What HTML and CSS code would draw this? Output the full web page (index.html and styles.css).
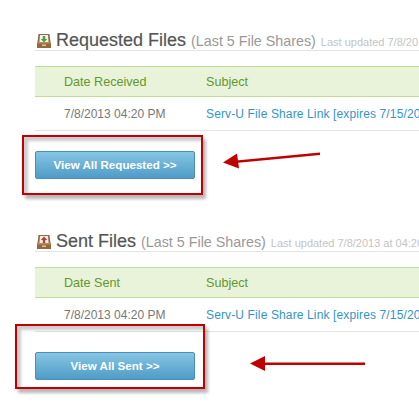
FILE: index.html
```html
<!DOCTYPE html>
<html lang="en">

<head>
  <meta charset="UTF-8">
  <meta name="viewport" content="width=device-width, initial-scale=1.0">
  <title>File Shares</title>
  <link rel="stylesheet" href="styles.css">
</head>

<body>
  <div class="page">
    <div class="section">
      <h2 class="title">
        <svg class="tray" width="16" height="16" viewBox="0 0 16 16">
          <path d="M2.5 1h11l1 8h-13z" fill="#8a6a4a"/>
          <path d="M4 2h8l.6 7H3.4z" fill="#f4f1ea"/>
          <path d="M6.800 3h2.400v3h2l-3.200 3.400L4.800 6h2z" fill="#4f9e3a"/>
          <path d="M1 9h14v6H1z" fill="#94683e"/>
          <path d="M1 9h14v1.500H1z" fill="#b88d5e"/>
          <path d="M6 11.500h4v1.500H6z" fill="#d9c3a3"/>
        </svg>
        <span class="name">Requested Files</span>
        <span class="sub">(Last 5 File Shares)</span>
        <span class="updated">Last updated 7/8/2013 at 04:20 PM</span>
      </h2>
      <div class="table">
        <div class="row head">
          <div class="col-date">Date Received</div>
          <div class="col-subject">Subject</div>
        </div>
        <div class="row">
          <div class="col-date">7/8/2013 04:20 PM</div>
          <div class="col-subject"><a href="#">Serv-U File Share Link [expires 7/15/2013]</a></div>
        </div>
      </div>
      <a class="btn" href="#">View All Requested &gt;&gt;</a>
    </div>

    <div class="section second">
      <h2 class="title">
        <svg class="tray" width="16" height="16" viewBox="0 0 16 16">
          <path d="M2.5 1h11l1 8h-13z" fill="#8a6a4a"/>
          <path d="M4 2h8l.6 7H3.4z" fill="#f4f1ea"/>
          <path d="M8 2.500l3.200 3.400h-2v3.100H6.800V5.900h-2z" fill="#c8352b"/>
          <path d="M1 9h14v6H1z" fill="#94683e"/>
          <path d="M1 9h14v1.500H1z" fill="#b88d5e"/>
          <path d="M6 11.500h4v1.500H6z" fill="#d9c3a3"/>
        </svg>
        <span class="name">Sent Files</span>
        <span class="sub">(Last 5 File Shares)</span>
        <span class="updated">Last updated 7/8/2013 at 04:20 PM</span>
      </h2>
      <div class="table">
        <div class="row head">
          <div class="col-date">Date Sent</div>
          <div class="col-subject">Subject</div>
        </div>
        <div class="row">
          <div class="col-date">7/8/2013 04:20 PM</div>
          <div class="col-subject"><a href="#">Serv-U File Share Link [expires 7/15/2013]</a></div>
        </div>
      </div>
      <a class="btn" href="#">View All Sent &gt;&gt;</a>
    </div>

    <!-- annotations drawn over the screenshot -->
    <div class="mark mark-1"></div>
    <div class="mark mark-2"></div>
    <svg class="arrows" width="419" height="410" viewBox="0 0 419 410">
      <g fill="#c00000" stroke="none">
        <path d="M320 152.500L236 160.500l-.3 2.500L320 155z"/>
        <path d="M223 162.500L237 153.500l2 15z"/>
        <path d="M365 362.500H264v2.500h101z"/>
        <path d="M250 363.500L265 356v15z"/>
      </g>
    </svg>
  </div>
</body>

</html>
```

FILE: styles.css
```css
* {
  margin: 0;
  padding: 0;
  box-sizing: border-box;
}

html {
  background-color: #fff;
}

body {
  font-family: "Liberation Sans", Arial, sans-serif;
}

.page {
  position: relative;
  width: 419px;
  height: 410px;
  overflow: hidden;
  padding: 29px 0 0 35px;
}

.section {
  width: 460px;
}

.second {
  margin-top: 51px;
}

.title {
  display: flex;
  align-items: baseline;
  height: 22px;
  padding-top: 2px;
  border-bottom: 1px solid #e4e4e4;
  white-space: nowrap;
  font-weight: normal;
}

.tray {
  align-self: center;
  flex: none;
  margin: 0 4px 0 1px;
}

.name {
  font-size: 18px;
  line-height: 19px;
  color: #555;
  -webkit-text-stroke: 0.2px #555;
}

.sub {
  font-size: 14.3px;
  color: #999;
  margin-left: 5px;
}

.updated {
  font-size: 11px;
  color: #c4c4c4;
  margin-left: 5px;
}

.table {
  margin-top: 15px;
  font-size: 12px;
}

.row {
  display: flex;
  align-items: center;
  height: 34px;
  border-bottom: 1px solid #e4e4e4;
  color: #777;
}

.head {
  height: 31px;
  background-color: #e9f3d9;
  border-top: 1px solid #c3dc95;
  border-bottom: 1px solid #c3dc95;
  color: #64962e;
  font-size: 12.6px;
}

.col-date {
  width: 171px;
  padding-left: 29px;
  flex: none;
}

.col-subject a {
  color: #3295c9;
  text-decoration: none;
  letter-spacing: 0.13px;
}

.btn {
  display: block;
  width: 160px;
  height: 28px;
  margin-top: 20px;
  border: 1px solid #4a8fb5;
  border-radius: 2px;
  background: linear-gradient(#86c5e4, #4f9cc7);
  color: #fff;
  font-size: 11.6px;
  font-weight: bold;
  line-height: 26px;
  text-align: center;
  text-decoration: none;
}

.mark {
  position: absolute;
  border: 2px solid #c00000;
  box-shadow: 3px 4px 3px rgba(0, 0, 0, 0.28), inset 4px 4px 3px rgba(0, 0, 0, 0.2);
}

.mark-1 {
  left: 22px;
  top: 135px;
  width: 181px;
  height: 60px;
}

.mark-2 {
  left: 15px;
  top: 324px;
  width: 190px;
  height: 65px;
}

.arrows {
  position: absolute;
  left: 0;
  top: 0;
}
```
